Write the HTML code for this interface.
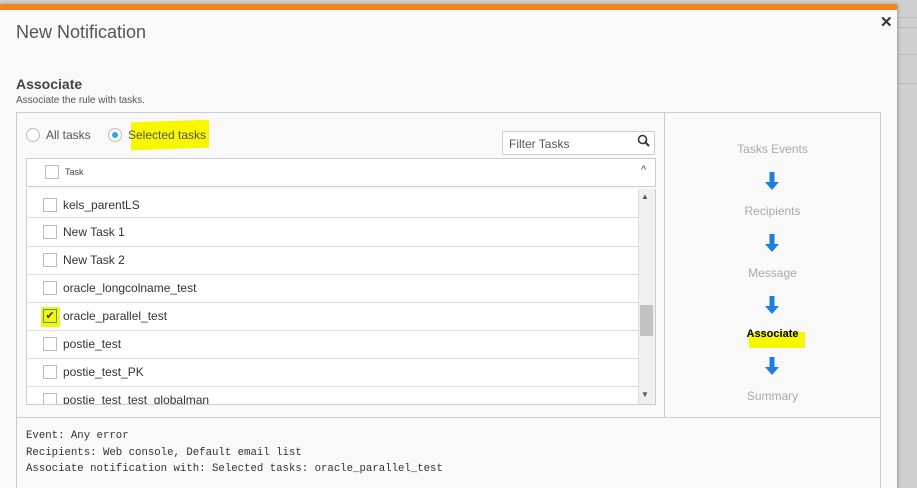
<!DOCTYPE html>
<html><head><style>
html{overflow:hidden;height:488px}
body{margin:0;width:917px;height:488px;overflow:hidden;background:#cfcfcf;font-family:"Liberation Sans",sans-serif;position:relative}
.a{position:absolute}
.modal{left:0;top:4px;width:897px;height:478px;background:#f9f9f9;border-top:6px solid #f5841f;box-shadow:1px 0 3px #999}
.row{position:absolute;left:27px;width:611px;height:28px;border-bottom:1px solid #ddd;font-size:12px;color:#333}
.cb{position:absolute;left:16px;top:7px;width:12px;height:12px;border:1px solid #bbb;background:#fff}
.row span{position:absolute;left:36px;top:7px}
.step{position:absolute;left:665px;width:215px;text-align:center;font-size:12px;color:#aaa}
.arr{position:absolute;left:764px}
</style></head><body>
<div class="a" style="left:898px;top:17px;width:19px;height:1px;background:#bbb"></div>
<div class="a" style="left:898px;top:27px;width:19px;height:1px;background:#bbb"></div>
<div class="a" style="left:898px;top:54px;width:19px;height:1px;background:#bbb"></div>
<div class="a" style="left:898px;top:83px;width:19px;height:1px;background:#bbb"></div>
<div class="a modal"></div>
<div class="a" style="left:880px;top:13px;font-size:15px;font-weight:bold;color:#333">✕</div>
<div class="a" style="left:16px;top:22px;font-size:18px;color:#555">New Notification</div>
<div class="a" style="left:16px;top:76px;font-size:14px;font-weight:bold;color:#444">Associate</div>
<div class="a" style="left:16px;top:95px;font-size:10px;color:#555">Associate the rule with tasks.</div>
<div class="a" style="left:16px;top:112px;width:863px;height:380px;border:1px solid #ccc"></div>
<div class="a" style="left:664px;top:112px;width:1px;height:305px;background:#ccc"></div>
<div class="a" style="left:16px;top:417px;width:864px;height:1px;background:#ccc"></div>
<div class="a" style="left:26px;top:128px;width:12px;height:12px;border:1px solid #bbb;border-radius:50%;background:#fff"></div>
<div class="a" style="left:46px;top:128px;font-size:12px;color:#555">All tasks</div>
<div class="a" style="left:108px;top:128px;width:12px;height:12px;border:1px solid #bbb;border-radius:50%;background:#fff"></div>
<div class="a" style="left:112px;top:132px;width:6px;height:6px;border-radius:50%;background:#2aa7e8"></div>
<div class="a" style="left:131px;top:121px;width:78px;height:28px;background:#f7f700;transform:skewY(-2deg)"></div>
<div class="a" style="left:128px;top:128px;font-size:12px;color:#555">Selected tasks</div>
<div class="a" style="left:502px;top:131px;width:151px;height:22px;border:1px solid #ccc;border-radius:2px;background:#fff"></div>
<div class="a" style="left:509px;top:137px;font-size:12px;color:#555">Filter Tasks</div>
<svg class="a" style="left:637px;top:134px" width="14" height="14"><circle cx="5.5" cy="5.5" r="4" fill="none" stroke="#333" stroke-width="1.6"/><path d="M8.5 8.5L12 12" stroke="#333" stroke-width="2"/></svg>
<div class="a" style="left:26px;top:158px;width:628px;height:27px;border:1px solid #ccc;background:#fff"></div>
<div class="a" style="left:45px;top:165px;width:12px;height:12px;border:1px solid #bbb;background:#fff"></div>
<div class="a" style="left:65px;top:167px;font-size:9px;color:#444">Task</div>
<div class="a" style="left:641px;top:164px;font-size:11px;color:#444">^</div>
<div class="a" style="left:26px;top:189px;width:628px;height:215px;border:1px solid #ccc;border-top:0;background:#fff;overflow:hidden">
<div class="row" style="top:0;left:0"><div class="cb" style="top:9px"></div><span style="top:9px">kels_parentLS</span></div>
<div class="row" style="top:29px;left:0"><div class="cb"></div><span>New Task 1</span></div>
<div class="row" style="top:57px;left:0"><div class="cb"></div><span>New Task 2</span></div>
<div class="row" style="top:85px;left:0"><div class="cb"></div><span>oracle_longcolname_test</span></div>
<div class="row" style="top:113px;left:0"><div class="a" style="left:14px;top:5px;width:19px;height:20px;background:#f7f700"></div><div class="cb" style="border-color:#39c;background:#f7f700;text-align:center;font-size:11px;line-height:12px">✔</div><span>oracle_parallel_test</span></div>
<div class="row" style="top:141px;left:0"><div class="cb"></div><span>postie_test</span></div>
<div class="row" style="top:169px;left:0"><div class="cb"></div><span>postie_test_PK</span></div>
<div class="row" style="top:197px;left:0"><div class="cb"></div><span>postie_test_test_globalman</span></div>
<div class="a" style="left:611px;top:0;width:16px;height:215px;background:#f0f0f0;border-left:1px solid #ddd"></div>
<div class="a" style="left:613px;top:116px;width:13px;height:31px;background:#c2c2c2"></div>
<div class="a" style="left:614px;top:3px;font-size:8px;color:#555">▲</div>
<div class="a" style="left:614px;top:201px;font-size:8px;color:#555">▼</div>
</div>
<div class="step" style="top:142px">Tasks Events</div>
<div class="step" style="top:204px">Recipients</div>
<div class="step" style="top:266px">Message</div>
<div class="a" style="left:749px;top:332px;width:56px;height:16px;background:#f7f700"></div>
<div class="step" style="top:328px;color:#000;font-weight:bold;font-size:11px">Associate</div>
<div class="step" style="top:389px">Summary</div>
<svg class="arr" style="top:172px" width="16" height="19"><path d="M5.5 0h5v10h4.5L8 18 1 10h4.5z" fill="#1a7fe0"/></svg>
<svg class="arr" style="top:234px" width="16" height="19"><path d="M5.5 0h5v10h4.5L8 18 1 10h4.5z" fill="#1a7fe0"/></svg>
<svg class="arr" style="top:296px" width="16" height="19"><path d="M5.5 0h5v10h4.5L8 18 1 10h4.5z" fill="#1a7fe0"/></svg>
<svg class="arr" style="top:357px" width="16" height="19"><path d="M5.5 0h5v10h4.5L8 18 1 10h4.5z" fill="#1a7fe0"/></svg>
<div class="a" style="left:26px;top:428px;font-family:'Liberation Mono',monospace;font-size:10.7px;line-height:16.5px;color:#333;white-space:pre">Event: Any error
Recipients: Web console, Default email list
Associate notification with: Selected tasks: oracle_parallel_test</div>
</body></html>
